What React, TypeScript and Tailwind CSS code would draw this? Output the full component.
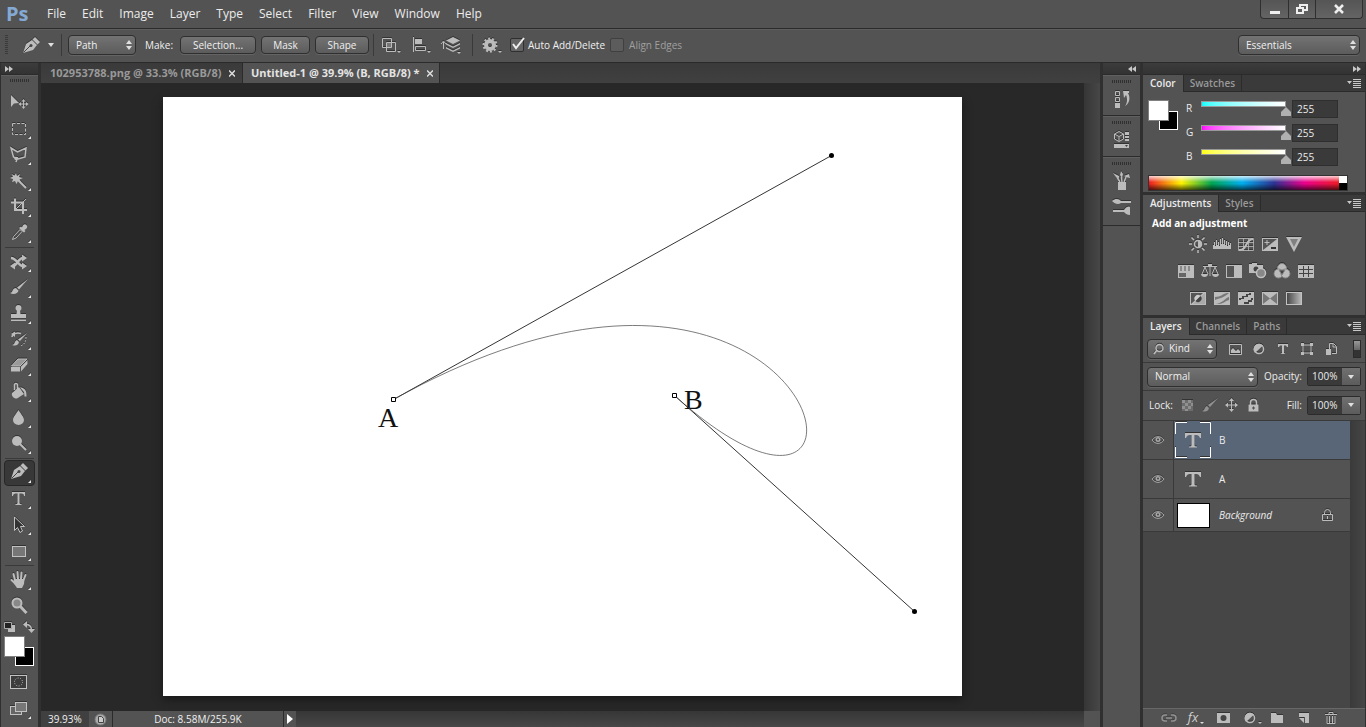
import React from "react";

type IconProps = {
  w?: number;
  h?: number;
  className?: string;
  children: React.ReactNode;
};

function Icon({ w = 24, h = 20, className = "", children }: IconProps) {
  return (
    <svg
      width={w}
      height={h}
      viewBox={`0 0 ${w} ${h}`}
      fill="currentColor"
      aria-hidden="true"
      className={`shrink-0 text-[#bcbcbc] [filter:drop-shadow(0_-1px_0_#333)] ${className}`}
    >
      {children}
    </svg>
  );
}

const line = { fill: "none", stroke: "currentColor" };

const penShape = (
  <>
    <path d="M2 19L5 10L11 6L16 11L12 16Z" />
    <path d="M11.5 5.5L14 3L19 8L16.5 10.5Z" />
    <path d="M2.5 18.5L9 12" stroke="#444" fill="none" />
    <circle cx="10" cy="11.5" r="1.5" fill="#444" />
  </>
);

const brushShape = (
  <>
    <path d="M19 4L10 14.5L8 12.5Z" />
    <path d="M1 18C4 18 3 13 7 13L9.5 15.5C9 19 4 20 1 18Z" />
  </>
);

const toolGroups = [
  [
    {
      name: "Move",
      corner: false,
      icon: (
        <>
          <path d="M2 5L2 17L5 13.5L10 13Z" />
          <path d="M14.5 10V18M10.5 14H18.5" {...line} />
          <path d="M14.5 9L12.5 11.5H16.5ZM14.5 19L12.5 16.5H16.5ZM9.5 14L12 12V16ZM19.5 14L17 12V16Z" />
        </>
      ),
    },
    {
      name: "Marquee",
      corner: true,
      icon: <rect x="3.5" y="7.5" width="13" height="11" strokeDasharray="3 1.5" {...line} />,
    },
    {
      name: "Lasso",
      corner: true,
      icon: (
        <path d="M2 6L8.5 10L17 6L16 15L9 17L4.5 15ZM9 16C5 14 5 18 8 17L7 20" strokeWidth="1.5" {...line} />
      ),
    },
    {
      name: "Magic Wand",
      corner: true,
      icon: (
        <>
          <path d="M7 5L8 8L11 6L10 9L14 10L10.5 11.5L12 14L9 13L7.5 16L6 13L3 14L4 11L1 10L4 8.5L2.5 6L5.5 7.5Z" />
          <path d="M9 12L17 20" strokeWidth="2" {...line} />
        </>
      ),
    },
    {
      name: "Crop",
      corner: true,
      icon: (
        <>
          <path d="M6 4.5V16H18M2 8.5H14V20" strokeWidth="2" {...line} />
          <path d="M7 15L17 5" {...line} />
        </>
      ),
    },
    {
      name: "Eyedropper",
      corner: true,
      icon: (
        <>
          <path d="M3.5 19.5L4.5 16.5L11 9.5L13 11.5L7 18Z" {...line} />
          <path d="M10 8L12 6.5L13 7.5C14 4 16 3.5 17.5 5C19 7 18 8.5 15.5 10L16.5 11L15 12.5Z" />
        </>
      ),
    },
  ],
  [
    {
      name: "Content-Aware Move",
      corner: true,
      icon: (
        <>
          <path d="M2 9C8 9 9 17 14 17M4 17C8 17 9 9 14 9" strokeWidth="2.5" {...line} />
          <path d="M13 13.5L18 17L13 20.5ZM13 5.5L18 9L13 12.5ZM6 13.5L1 17L6 20.5Z" />
        </>
      ),
    },
    { name: "Brush", corner: true, icon: brushShape },
    {
      name: "Clone Stamp",
      corner: true,
      icon: (
        <>
          <circle cx="9.5" cy="7" r="3" />
          <path d="M8 9H11L11.5 13H17V17H2V13H7.5ZM2 18.5H17V20H2Z" />
        </>
      ),
    },
    {
      name: "History Brush",
      corner: true,
      icon: (
        <>
          <path d="M18 6L11 14L9 12.5ZM3 18C6 18 5 14 8 13L10 15C9 19 6 19 3 18Z" />
          <path d="M3 10C3 7 8 5 12 6.5" strokeWidth="1.5" {...line} />
          <path d="M2 7L6 4.5L6 10Z" />
          <path d="M17 10C17 15 15 18 11 19" strokeDasharray="1.5 1.5" {...line} />
        </>
      ),
    },
    {
      name: "Eraser",
      corner: true,
      icon: (
        <>
          <path d="M9 6H18L11 13H2.5Z" fill="#999" stroke="currentColor" />
          <path d="M2 14H11V18.5H2ZM12 13.5L18.5 7V11L12 18.5Z" />
        </>
      ),
    },
    {
      name: "Paint Bucket",
      corner: true,
      icon: (
        <>
          <path d="M3 14L10 8L15 15L8 19.5C5 20 2 17 3 14Z" />
          <path d="M8.5 13V6C8 3.5 5 4 5.5 7V11" strokeWidth="1.5" {...line} />
          <path d="M11 8.5C15 8.500 18 11 17.5 17.5H15.5L15 13Z" />
        </>
      ),
    },
    {
      name: "Blur",
      corner: true,
      icon: <path d="M9.5 5C12 9 15 12 15 15A5.5 5 0 0 1 4 15C4 12 7 9 9.5 5Z" />,
    },
    {
      name: "Dodge",
      corner: true,
      icon: (
        <>
          <circle cx="8" cy="10" r="5" />
          <path d="M11 13L17 19" strokeWidth="2" {...line} />
        </>
      ),
    },
  ],
  [
    { name: "Pen", corner: true, icon: penShape },
    {
      name: "Horizontal Type",
      corner: true,
      icon: <path d="M3 6H16V10H15C15 8 14 7.5 10.5 7.5V16.5C10.500 18 11 18 12.5 18V19H6.5V18C8 18 8.5 18 8.5 16.5V7.5C5 7.5 4.5 8 4 10H3Z" />,
    },
    {
      name: "Path Selection",
      corner: true,
      icon: <path d="M5.5 5V18.5L8.5 15.5L11 20.5L13.5 19L11.5 14.5H15.5Z" fill="#333" stroke="#c2c2c2" />,
    },
    {
      name: "Rectangle",
      corner: true,
      icon: <rect x="3.5" y="8.5" width="13" height="10" fill="#777" stroke="#c2c2c2" />,
    },
  ],
  [
    {
      name: "Hand",
      corner: true,
      icon: (
        <>
          <path d="M6 13L4.5 7M9 12L8.5 5M12 12L12.5 5.5M14.5 13L16.5 8M7 17L2.5 13" strokeWidth="2" strokeLinecap="round" {...line} />
          <path d="M5 12H15.5L15 17L13 21H8L4.5 16Z" />
        </>
      ),
    },
    {
      name: "Zoom",
      corner: false,
      icon: (
        <>
          <circle cx="8" cy="10" r="4.5" fill="#888" stroke="#bcbcbc" strokeWidth="2" />
          <path d="M11 13L17.5 20" strokeWidth="3" {...line} />
        </>
      ),
    },
  ],
];

function Sep() {
  return <span className="h-[22px] w-px bg-[#3a3a3a]" />;
}

const raised =
  "rounded-sm border border-[#2f2f2f] bg-linear-to-b from-[#737373] to-[#5c5c5c] text-[#f0f0f0] shadow-[0_1px_0_#646464]";

type DropProps = { label: string; value: string; className: string; pad?: string; children?: React.ReactNode };

function Drop({ label, value, className, pad = "pl-[7px]", children }: DropProps) {
  return (
    <span className={`relative flex h-[20px] shrink-0 items-center ${className}`}>
      <select aria-label={label} className={`h-full w-full appearance-none pr-4 outline-none ${pad} ${raised}`}>
        <option>{value}</option>
      </select>
      {children}
      <svg width="6" height="10" viewBox="0 0 6 10" fill="#e0e0e0" className="pointer-events-none absolute right-1">
        <path d="M0 4L3 0L6 4ZM0 6H6L3 10Z" />
      </svg>
    </span>
  );
}

function MenuBar() {
  const menus = ["File", "Edit", "Image", "Layer", "Type", "Select", "Filter", "View", "Window", "Help"];
  return (
    <header className="flex h-[29px] shrink-0 items-start justify-between border-b border-[#2b2b2b]">
      <div className="flex h-[28px] items-center">
        <span className="w-[39px] pl-[6px] text-[20px] leading-none font-bold text-[#84a9d5]">Ps</span>
        <nav className="flex text-[12px] text-[#ececec]">
          {menus.map((m) => (
            <button key={m} type="button" className="px-2">
              {m}
            </button>
          ))}
        </nav>
      </div>
      <div className="mr-[3px] flex h-[19px] divide-x divide-[#2f2f2f] rounded-b-sm border border-t-0 border-[#2f2f2f] bg-linear-to-b from-[#555] to-[#646464]">
        <button type="button" aria-label="Minimize" className="flex w-[28px] items-center justify-center">
          <svg width="12" height="12" viewBox="0 0 12 12" fill="#eee"><path d="M1 8H11V11H1Z" /></svg>
        </button>
        <button type="button" aria-label="Restore" className="flex w-[27px] items-center justify-center">
          <svg width="12" height="12" viewBox="0 0 12 12" fill="none" stroke="#eee" strokeWidth="2"><path d="M4 4V2H11V7H8M1 5H7V10H1Z" /></svg>
        </button>
        <button type="button" aria-label="Close" className="flex w-[46px] items-center justify-center">
          <svg width="12" height="12" viewBox="0 0 12 12" fill="none" stroke="#eee" strokeWidth="2.5"><path d="M2 2L10 10M10 2L2 10" /></svg>
        </button>
      </div>
    </header>
  );
}

function OptionsBar() {
  const btn = `h-[18px] ${raised}`;
  const mark = <path d="M17 17H21L19 19Z" />;
  return (
    <div className="flex h-[33px] shrink-0 items-center border-t border-[#5e5e5e] pr-[6px] pb-[2px] pl-[5px]">
      <span className="h-5 w-[3px] bg-[repeating-linear-gradient(#3a3a3a_0_1px,transparent_1px_2px)]" />
      <button type="button" aria-label="Pen tool presets" className="ml-[13px] flex items-center">
        <Icon w={22} h={22}>{penShape}</Icon>
        <svg width="6" height="4" viewBox="0 0 6 4" fill="#e0e0e0" className="ml-[5px]"><path d="M0 0H6L3 4Z" /></svg>
      </button>
      <span className="w-[7px]" />
      <Sep />
      <Drop label="Tool mode" value="Path" className="mx-[6px] w-[68px]" />
      <span className="ml-[3px] w-[35px] text-[#f0f0f0]">Make:</span>
      <div className="flex gap-[5px] pr-[4px]">
        <button type="button" className={`w-[76px] ${btn}`}>Selection...</button>
        <button type="button" className={`w-[49px] ${btn}`}>Mask</button>
        <button type="button" className={`w-[54px] ${btn}`}>Shape</button>
      </div>
      <Sep />
      <div className="flex gap-[6px] px-[6px]">
        <button type="button" aria-label="Path operations">
          <Icon h={22}>
            <path d="M2.5 4.5H11.5V13.5H2.5ZM6.5 8.5H15.5V17.5H6.5Z" {...line} />
            <path d="M7 9H11V13H7Z" fill="#777" />
            {mark}
          </Icon>
        </button>
        <button type="button" aria-label="Path alignment">
          <Icon h={22}>
            <path d="M3.5 3V18M5.5 12.5H15.5V16.5H5.5Z" {...line} />
            <path d="M5 5H12V10H5Z" />
            {mark}
          </Icon>
        </button>
        <button type="button" aria-label="Path arrangement">
          <Icon h={22}>
            <path d="M3.5 15V8M1 10L3.5 7L6 10" {...line} />
            <path d="M13 3L20 6.5L13 10L6 6.5Z" />
            <path d="M6 9L13 12.5L20 9V10.5L13 14L6 10.5ZM6 13L13 16.5L20 13V14.5L13 18L6 14.5Z" />
            <path d="M17 18H21L19 20Z" />
          </Icon>
        </button>
      </div>
      <span className="w-[2px]" />
      <Sep />
      <button type="button" aria-label="Path options" className="ml-[8px]">
        <Icon h={22}>
          <circle cx="9" cy="11" r="4" strokeWidth="4" {...line} />
          <circle cx="9" cy="11" r="6.5" strokeWidth="2" strokeDasharray="2 2" {...line} />
          {mark}
        </Icon>
      </button>
      <label className="ml-[5px] flex items-center gap-[4px] text-[#f0f0f0]">
        <span className="relative flex size-[14px]">
          <input type="checkbox" defaultChecked className="size-[14px] appearance-none rounded-xs border border-[#2f2f2f] bg-[#646464]" />
          <svg width="16" height="14" viewBox="0 0 16 14" fill="none" stroke="#eee" strokeWidth="2" className="pointer-events-none absolute -top-px left-0">
            <path d="M3 7L6 11L14 1" />
          </svg>
        </span>
        Auto Add/Delete
      </label>
      <label className="ml-[5px] flex items-center gap-[5px] text-[#a0a0a0]">
        <input type="checkbox" disabled className="size-[14px] appearance-none rounded-xs border border-[#404040] bg-[#5c5c5c]" />
        Align Edges
      </label>
      <div className="flex-1" />
      <Drop label="Workspace" value="Essentials" className="w-[122px]" />
    </div>
  );
}

function Chevrons({ left = false }: { left?: boolean }) {
  return (
    <svg width="8" height="6" viewBox="0 0 8 6" fill="#c8c8c8" className={left ? "rotate-180" : ""}>
      <path d="M0 0L4 3L0 6ZM4 0L8 3L4 6Z" />
    </svg>
  );
}

function Grip() {
  return <span className="h-[3px] w-5 bg-[repeating-linear-gradient(90deg,#303030_0_1px,transparent_1px_2px)]" />;
}

const strip = "flex h-[12px] shrink-0 items-center border-b border-[#2b2b2b] bg-linear-to-b from-[#3c3c3c] to-[#333] px-1";

function ColorChips() {
  return (
    <div className="relative h-[30px] w-[30px]">
      <span className="absolute right-0 bottom-0 size-[19px] border border-white bg-black" />
      <span className="absolute top-0 left-0 size-[21px] border border-[#808080] bg-white" />
    </div>
  );
}

function Toolbar() {
  return (
    <aside className="flex w-[37px] shrink-0 flex-col">
      <div className={strip}><Chevrons /></div>
      <div className="flex flex-1 flex-col border-t border-[#606060] bg-[#535353]">
        <div className="flex h-[14px] items-center justify-center pb-[5px]"><Grip /></div>
        {toolGroups.map((group, i) => (
          <div key={i} className="flex flex-col">
            {i > 0 && <hr className="mx-1 my-px border-[#3a3a3a]" />}
            {group.map((tool) => (
              <button
                key={tool.name}
                type="button"
                aria-label={tool.name}
                className={
                  tool.name === "Pen"
                    ? "mx-[3px] h-[26px] rounded-sm border border-[#272727] bg-[#383838] pl-1"
                    : "h-[26px] pl-2"
                }
              >
                <Icon h={24}>
                  <g transform="translate(0 -1)">{tool.icon}</g>
                  {tool.corner && <path d="M22 19V22H19Z" fill="#e8e8e8" />}
                </Icon>
              </button>
            ))}
          </div>
        ))}
        <div className="flex h-[15px] items-center justify-between px-[3px]">
          <button type="button" aria-label="Default colors">
            <Icon w={12} h={12}>
              <path d="M4 4H11V11H4Z" />
              <path d="M.5 1.5H7.5V7.5H.5Z" fill="#222" stroke="#aaa" />
            </Icon>
          </button>
          <button type="button" aria-label="Switch colors">
            <Icon w={12} h={12}>
              <path d="M2 3.5C6 3 8.5 5 8.5 9" strokeWidth="1.5" {...line} />
              <path d="M0 3.5L4 0V7ZM5 8H12L8.5 12Z" />
            </Icon>
          </button>
        </div>
        <div className="pt-[2px] pl-[3px]"><ColorChips /></div>
        <button type="button" aria-label="Quick mask" className="mt-[4px] h-[24px] pl-2">
          <Icon h={22}>
            <rect x="1.5" y="4.5" width="16" height="13" fill="#3c3c3c" stroke="#c2c2c2" />
            <circle cx="9.5" cy="11" r="4" strokeDasharray="1 1.5" {...line} />
          </Icon>
        </button>
        <button type="button" aria-label="Screen mode" className="h-[30px] pl-2">
          <Icon h={24}>
            <rect x="1.5" y="9.5" width="11" height="8" fill="#666" stroke="#c2c2c2" />
            <rect x="6.5" y="5.5" width="11" height="9" fill="#777" stroke="#c2c2c2" />
            <path d="M22 19V22H19Z" fill="#e8e8e8" />
          </Icon>
        </button>
      </div>
    </aside>
  );
}

function Drawing() {
  return (
    <svg width="799" height="599" viewBox="0 0 799 599" className="shrink-0 bg-white shadow-[0_4px_8px_#1a1a1a]">
      <g fontFamily="'Liberation Serif', serif" fontSize="28" fill="#111">
        <text x="215" y="330">A</text>
        <text x="521" y="312">B</text>
      </g>
      <g fill="none" stroke="#000">
        <path d="M230.5 302.5L668.5 58.5M511.5 298.5L751.5 514.5" strokeWidth=".8" />
        <path d="M230.5 302.5C668.5 58.5 751.5 514.5 511.5 298.5" stroke="#444" strokeWidth=".7" />
        <path d="M228.5 300.5H232.5V304.5H228.5ZM509.5 296.5H513.5V300.5H509.5Z" fill="#fff" />
      </g>
      <circle cx="668.5" cy="58.5" r="2.5" />
      <circle cx="751.5" cy="514.5" r="2.5" />
    </svg>
  );
}

function CloseTab() {
  return (
    <button type="button" aria-label="Close tab">
      <svg width="6" height="7" viewBox="0 0 6 7" stroke="#ddd" strokeWidth="1.5"><path d="M0 .5L6 6.5M6 .5L0 6.5" /></svg>
    </button>
  );
}

function Document() {
  return (
    <main className="flex min-w-0 flex-1 flex-col">
      <div className="flex h-[20px] shrink-0 bg-linear-to-b from-[#3a3a3a] to-[#404040] text-[11px] font-bold whitespace-nowrap">
        <div className="flex w-[202px] items-center justify-between border-r border-[#2b2b2b] pr-[7px] pl-[9px] text-[#999]">
          <button type="button" className="font-bold">102953788.png @ 33.3% (RGB/8)</button>
          <CloseTab />
        </div>
        <div className="flex w-[197px] items-center justify-between border-r border-[#2b2b2b] bg-[#535353] pr-[6px] pl-[8px] text-[#e4e4e4]">
          <button type="button" className="font-bold">Untitled-1 @ 39.9% (B, RGB/8) *</button>
          <CloseTab />
        </div>
      </div>
      <div className="flex min-h-0 flex-1">
        <div className="flex min-w-0 flex-1 items-center justify-center overflow-hidden bg-[#282828] pb-px">
          <Drawing />
        </div>
        <div className="w-[16px] bg-linear-to-r from-[#363636] to-[#474747]" />
      </div>
      <footer className="flex h-[16px] shrink-0 text-[10px] text-[#f0f0f0]">
        <input aria-label="Zoom level" defaultValue="39.93%" className="w-[48px] bg-[#404040] pl-[7px] outline-none" />
        <button type="button" aria-label="Share" className="flex w-[24px] items-center justify-center border-r border-[#2b2b2b] bg-[#535353]">
          <svg width="13" height="13" viewBox="0 0 13 13">
            <circle cx="6.5" cy="6.5" r="5.5" fill="#aaa" stroke="#777" />
            <path d="M4.5 3.5H7.5L9.5 5.5V9.5H4.5Z" fill="#ccc" stroke="#444" />
          </svg>
        </button>
        <span className="w-[170px] bg-[#535353] text-center leading-[16px]">Doc: 8.58M/255.9K</span>
        <button type="button" aria-label="Status options" className="flex w-[13px] items-center justify-center border-l border-[#2b2b2b] bg-[#535353]">
          <svg width="6" height="10" viewBox="0 0 6 10" fill="#fff"><path d="M0 0L6 5L0 10Z" /></svg>
        </button>
        <div className="flex-1 bg-linear-to-b from-[#363636] to-[#474747]" />
        <div className="w-[16px] bg-[#535353]" />
      </footer>
    </main>
  );
}

function Dock() {
  const cell = "flex flex-col items-center gap-[4px] border-t border-t-[#606060] border-b border-b-[#2b2b2b] pt-[4px]";
  return (
    <aside className="flex w-[37px] shrink-0 flex-col bg-[#535353]">
      <div className={`${strip} justify-end`}><Chevrons left /></div>
      <div className={`h-[41px] ${cell}`}>
        <Grip />
        <button type="button" aria-label="History">
          <Icon w={20} h={22}>
            <path d="M3.5 4.5H7.5V8.5H3.5ZM3.5 10.5H7.5V14.5H3.5Z" {...line} />
            <path d="M3 16H8V21H3ZM11 4H17V6H16C18.5 10 18 16 13 19C15.5 15 15.5 11 14 8L12 11Z" />
          </Icon>
        </button>
      </div>
      <div className={`h-[41px] ${cell}`}>
        <Grip />
        <button type="button" aria-label="Properties">
          <Icon w={20} h={22}>
            <path d="M7 3.5L11.5 6V11L7 13.5L2.5 11V6ZM2.5 6L7 8.5L11.5 6M7 8.5V13" {...line} />
            <path d="M13 4H17V7H13ZM13 8H17V10H13ZM13 11H17V13H13ZM2 16H17V20H2Z" />
            <path d="M13 17H16L14.5 19Z" fill="#444" />
          </Icon>
        </button>
      </div>
      <div className={`h-[69px] ${cell}`}>
        <Grip />
        <button type="button" aria-label="Brush presets">
          <Icon w={20} h={22}>
            <path d="M6 13H14V21H6ZM1 4L7 7V9L4 8ZM9 2L11 5L10 9L8 6ZM12 7L17 5L18 9L14 8Z" />
            <path d="M5 8L8 13M9.5 8L10 13M14 8L12 13" strokeWidth="1.5" {...line} />
          </Icon>
        </button>
        <button type="button" aria-label="Brush">
          <Icon w={20} h={22}>
            <path d="M0 6C4 3 7 4 9 6H19V8H9C6 10 3 9 0 6ZM1 15H12C14 11 18 11 18 12V20C15 20 13 18 12 17H1Z" />
          </Icon>
        </button>
      </div>
    </aside>
  );
}

function Tabs({ names }: { names: string[] }) {
  return (
    <div className="flex h-[17px] shrink-0 bg-[#3a3a3a]">
      {names.map((name, i) => (
        <button
          key={name}
          type="button"
          className={
            i === 0
              ? "border-r border-[#2b2b2b] bg-[#535353] px-[7px] font-semibold text-[#ececec]"
              : "border-r border-b border-[#2b2b2b] px-[6px] font-semibold text-[#999]"
          }
        >
          {name}
        </button>
      ))}
      <div className="flex flex-1 items-center justify-end border-b border-[#2b2b2b] pr-[4px]">
        <button type="button" aria-label={`${names[0]} panel menu`}>
          <svg width="14" height="9" viewBox="0 0 14 9" fill="#c8c8c8">
            <path d="M0 2H5L2.5 5ZM6 0H14V1H6ZM6 2H14V3H6ZM6 4H14V5H6ZM6 6H14V7H6ZM6 8H14V9H6Z" />
          </svg>
        </button>
      </div>
    </div>
  );
}

function ColorPanel() {
  const channels = [
    { name: "R", track: "bg-linear-to-r from-[#00ffff] to-white" },
    { name: "G", track: "bg-linear-to-r from-[#ff00ff] to-white" },
    { name: "B", track: "bg-linear-to-r from-[#ffff00] to-white" },
  ];
  return (
    <section className="flex h-[117px] shrink-0 flex-col bg-[#535353]">
      <Tabs names={["Color", "Swatches"]} />
      <div className="flex px-[5px] pt-[8px]">
        <ColorChips />
        <div className="ml-[8px] flex flex-col">
          {channels.map((c) => (
            <div key={c.name} className="flex h-[24px] items-start text-[#ececec]">
              <label htmlFor={`value-${c.name}`} className="w-[10px] leading-[16px]">{c.name}</label>
              <div className="flex w-[95px] flex-col pt-px">
                <span className={`mx-[5px] h-[6px] border border-[#999] ${c.track}`} />
                <input
                  type="range"
                  min="0"
                  max="255"
                  defaultValue="255"
                  aria-label={`${c.name} slider`}
                  className="h-[9px] w-[95px] appearance-none bg-transparent [&::-webkit-slider-thumb]:h-[9px] [&::-webkit-slider-thumb]:w-[10px] [&::-webkit-slider-thumb]:appearance-none [&::-webkit-slider-thumb]:bg-[#b0b0b0] [&::-webkit-slider-thumb]:[clip-path:polygon(50%_0,100%_55%,100%_100%,0_100%,0_55%)]"
                />
              </div>
              <input id={`value-${c.name}`} defaultValue="255" className="ml-px h-[18px] w-[46px] border border-[#2f2f2f] bg-[#3a3a3a] pl-1 outline-none" />
            </div>
          ))}
        </div>
      </div>
      <div className="mx-[5px] mt-[3px] flex h-[16px] w-[200px] border border-[#333]">
        <div className="flex-1 bg-[linear-gradient(#fffc,#fff0_45%,#0000_55%,#000a),linear-gradient(90deg,#ed1c24,#fff200_17%,#00a651_33%,#00aeef_49%,#2e3192_66%,#ec008c_82%,#ed1c24)]" />
        <div className="flex w-[8px] flex-col">
          <span className="flex-1 bg-white" />
          <span className="flex-1 bg-black" />
        </div>
      </div>
    </section>
  );
}

const frame = <path d="M4 4H20V17H4Z" />;

const adjustments = [
  [
    {
      name: "Brightness/Contrast",
      icon: (
        <>
          <circle cx="12" cy="10" r="3.5" strokeWidth="1.5" {...line} />
          <path d="M12 6A4 4 0 0 1 12 14Z" />
          <path d="M12 1V4M12 16V19M3 10H6M18 10H21M5.5 3.5L8 6M16 14L18.5 16.5M18.5 3.5L16 6M8 14L5.5 16.5" strokeWidth="1.5" {...line} />
        </>
      ),
    },
    { name: "Levels", icon: <path d="M3 15V11H4V8H5V12H6V6H7V11H8V8H9V12H10V5H11V10H12V4H13V10H14V6H15V11H16V7H17V12H18V8H19V11H20V9H21V15Z" /> },
    {
      name: "Curves",
      icon: (
        <>
          <path d="M4.5 4.5H19.5V16.5H4.5ZM4 8.5H20M4 12.5H20M9.5 4V17M14.5 4V17" strokeWidth=".8" {...line} />
          <path d="M5 16C14 16 11 5 19 5" strokeWidth="2" {...line} />
        </>
      ),
    },
    {
      name: "Exposure",
      icon: (
        <>
          {frame}
          <path d="M5 5H19L5 16Z" fill="#555" />
          <path d="M9 6V11M6.5 8.5H11.5" {...line} />
          <path d="M13 13H18V15H13Z" fill="#333" />
        </>
      ),
    },
    {
      name: "Vibrance",
      icon: (
        <>
          <path d="M4 3H20L12 18Z" />
          <path d="M8 5H16L12 13Z" fill="#808080" />
        </>
      ),
    },
  ],
  [
    {
      name: "Hue/Saturation",
      icon: (
        <>
          {frame}
          <path d="M6 5H8V10H6ZM10 5H12V10H10ZM14 5H16V10H14Z" fill="#888" />
          <path d="M5 12H12V16H5Z" fill="#666" />
        </>
      ),
    },
    {
      name: "Color Balance",
      icon: (
        <>
          <path d="M5 5.5H19M12 3V15M7 6L4 13M7 6L10 13M17 6L14 13M17 6L20 13" {...line} />
          <path d="M3 13H10C10 17 3 17 3 13ZM14 13H21C21 17 14 17 14 13ZM10 3H14V6H10Z" />
        </>
      ),
    },
    {
      name: "Black & White",
      icon: (
        <>
          {frame}
          <path d="M5 5H12V16H5Z" fill="#555" />
        </>
      ),
    },
    {
      name: "Photo Filter",
      icon: (
        <>
          <path d="M3 3H6V2H11V4H17V12H3Z" />
          <circle cx="10" cy="8" r="2.5" fill="#444" />
          <circle cx="15" cy="12" r="4.5" fill="#888" stroke="#c2c2c2" strokeWidth="1.5" />
        </>
      ),
    },
    {
      name: "Channel Mixer",
      icon: (
        <g stroke="#888">
          <circle cx="12" cy="7" r="4.5" />
          <circle cx="8.5" cy="12.5" r="4.5" />
          <circle cx="15.5" cy="12.5" r="4.5" />
          <path d="M9 9H15L12 14Z" fill="#444" />
        </g>
      ),
    },
    {
      name: "Color Lookup",
      icon: (
        <>
          {frame}
          <path d="M5 8.5H19M5 12.5H19M9.5 5V16M14.5 5V16" stroke="#444" />
        </>
      ),
    },
  ],
  [
    {
      name: "Invert",
      icon: (
        <>
          {frame}
          <path d="M5 5H17L5 16Z" fill="#555" />
          <path d="M19 5V16H7Z" fill="#aaa" />
          <path d="M9.500 13A3.500 3.500 0 0 1 14.500 8Z" fill="#ccc" />
          <path d="M9.500 13A3.500 3.500 0 0 0 14.500 8Z" fill="#444" />
        </>
      ),
    },
    {
      name: "Posterize",
      icon: (
        <>
          {frame}
          <path d="M5 9C11 9 12 6 17 5H19C13 10 10 10 5 12ZM5 16C12 16 15 10 19 9V12C15 13 13 16 9 16Z" fill="#777" />
        </>
      ),
    },
    {
      name: "Threshold",
      icon: (
        <>
          {frame}
          <path d="M5 10H8V8H12V6H15V5H17V7H14V9H10V11H7V12H5ZM10 16V14H14V12H17V10H19V12H18V14H15V16Z" fill="#444" />
        </>
      ),
    },
    {
      name: "Selective Color",
      icon: (
        <>
          {frame}
          <path d="M5 5L12 10.5L5 16ZM19 5L12 10.5L19 16Z" fill="#777" />
        </>
      ),
    },
    {
      name: "Gradient Map",
      icon: (
        <>
          <defs>
            <linearGradient id="map">
              <stop stopColor="#444" />
              <stop offset="1" stopColor="#bbb" />
            </linearGradient>
          </defs>
          <rect x="4.5" y="4.5" width="15" height="12" fill="url(#map)" stroke="#c2c2c2" />
        </>
      ),
    },
  ],
];

function AdjustmentsPanel() {
  return (
    <section className="flex h-[120px] shrink-0 flex-col bg-[#535353]">
      <Tabs names={["Adjustments", "Styles"]} />
      <h2 className="pt-[3px] pl-[9px] leading-[16px] font-bold text-white">Add an adjustment</h2>
      <div className="flex flex-col gap-[7px] pt-[3px] pr-[16px]">
        {adjustments.map((row, i) => (
          <div key={i} className="flex justify-center">
            {row.map((a) => (
              <button key={a.name} type="button" aria-label={a.name}>
                <Icon>{a.icon}</Icon>
              </button>
            ))}
          </div>
        ))}
      </div>
    </section>
  );
}

function Percent({ label, id }: { label: string; id: string }) {
  return (
    <div className="flex items-center gap-[5px] text-[#ececec]">
      <label htmlFor={id}>{label}</label>
      <span className="flex h-[19px] rounded-xs border border-[#2b2b2b]">
        <input id={id} defaultValue="100%" className="w-[34px] bg-[#3a3a3a] pl-1 outline-none" />
        <button type="button" aria-label={`${label} slider`} className="flex w-[18px] items-center justify-center bg-linear-to-b from-[#707070] to-[#5c5c5c]">
          <svg width="6" height="4" viewBox="0 0 6 4" fill="#e0e0e0"><path d="M0 0H6L3 4Z" /></svg>
        </button>
      </span>
    </div>
  );
}

function Eye() {
  return (
    <button type="button" aria-label="Toggle visibility" className="flex w-[31px] shrink-0 items-center justify-center self-stretch border-r border-[#3a3a3a]">
      <Icon w={14} h={12} className="opacity-80">
        <path d="M1 6C4 1.5 10 1.5 13 6C10 10.5 4 10.5 1 6Z" {...line} />
        <circle cx="7" cy="5.5" r="2.5" />
        <circle cx="7" cy="5.5" r="1" fill="#444" />
      </Icon>
    </button>
  );
}

function TypeThumb({ selected = false }: { selected?: boolean }) {
  return (
    <Icon w={38} h={38}>
      {selected && <path d="M1.5 13V1.5H13M26 1.5H36.5V13M36.5 26V36.5H26M13 36.5H1.5V26" stroke="#fff" fill="none" />}
      <path d="M11 12H27V17H26C25 14.5 24 14 20.5 14V24C20.5 25 21.5 25.5 23 25.5V26.5H15V25.5C16.5 25.5 17.5 25 17.5 24V14C14 14 13 14.5 12 17H11Z" />
    </Icon>
  );
}

const lockBody = (
  <>
    <path d="M4.5 8V5.5A3 3 0 0 1 10.5 5.5V8" strokeWidth="1.5" {...line} />
    <path d="M2.5 7.5H12.5V14.5H2.5Z" />
    <path d="M7 10H8V12H7Z" stroke="#444" />
  </>
);

function LayersPanel() {
  return (
    <section className="flex min-h-0 flex-1 flex-col bg-[#535353]">
      <Tabs names={["Layers", "Channels", "Paths"]} />
      <div className="flex h-[28px] shrink-0 items-center border-b border-[#3a3a3a] px-[4px]">
        <Drop label="Filter type" value="Kind" className="w-[70px]" pad="pl-[21px]">
          <Icon w={12} h={12} className="pointer-events-none absolute left-[6px]">
            <circle cx="6.5" cy="5" r="3.5" strokeWidth="1.5" {...line} />
            <path d="M4 7L1 11" strokeWidth="1.5" {...line} />
          </Icon>
        </Drop>
        <div className="flex flex-1 justify-between pr-[10px] pl-[6px]">
          <button type="button" aria-label="Filter pixel layers">
            <Icon>
              <path d="M6.5 5.5H18.5V15.5H6.5Z" {...line} />
              <path d="M8 14V11L10 9L13 12L15 10L17 12V14Z" />
            </Icon>
          </button>
          <button type="button" aria-label="Filter adjustment layers">
            <Icon>
              <circle cx="12" cy="10" r="4.5" strokeWidth="1.5" {...line} />
              <path d="M8 14A5 5 0 0 1 16 6.5Z" />
            </Icon>
          </button>
          <button type="button" aria-label="Filter type layers">
            <Icon>
              <path d="M7 5H17V8H16L15 6.5H13V14L14.5 15H9.5L11 14V6.5H9L8 8H7Z" />
            </Icon>
          </button>
          <button type="button" aria-label="Filter shape layers">
            <Icon>
              <path d="M8 6H16V14H8Z" {...line} />
              <path d="M6 4H9V7H6ZM15 4H18V7H15ZM6 13H9V16H6ZM15 13H18V16H15Z" />
            </Icon>
          </button>
          <button type="button" aria-label="Filter smart objects">
            <Icon>
              <path d="M10.5 12V4.5H14.5L17.5 7.5V14.5H13M14 5V8H17" {...line} />
              <path d="M7 10H12V16H7Z" />
            </Icon>
          </button>
        </div>
        <button type="button" aria-label="Layer filtering" className="flex h-[18px] w-[9px] border border-[#2b2b2b] bg-[#333]">
          <span className="h-[9px] w-full bg-linear-to-b from-[#999] to-[#666]" />
        </button>
      </div>
      <div className="flex h-[28px] shrink-0 items-center justify-between border-b border-[#3a3a3a] px-[4px]">
        <Drop label="Blend mode" value="Normal" className="w-[111px]" />
        <Percent label="Opacity:" id="opacity" />
      </div>
      <div className="flex h-[30px] shrink-0 items-center border-b border-[#3a3a3a] px-[4px] pb-px pl-[6px]">
        <span className="w-[27px] text-[#ececec]">Lock:</span>
        <div className="flex flex-1">
          <button type="button" aria-label="Lock transparent pixels">
            <Icon w={22} h={18}>
              <path d="M6 4H17V15H6Z" fill="#6c6c6c" />
              <path d="M6 4H9V7H6ZM12 4H15V7H12ZM9 7H12V10H9ZM15 7H17V10H15ZM6 10H9V13H6ZM12 10H15V13H12ZM9 13H12V15H9Z" fill="#909090" />
            </Icon>
          </button>
          <button type="button" aria-label="Lock image pixels">
            <Icon w={22} h={18} className="opacity-60">
              <path d="M20 2L12 11L10 9ZM4 15C7 15 6 11 9 10L11 12C10 16 7 16 4 15Z" />
            </Icon>
          </button>
          <button type="button" aria-label="Lock position">
            <Icon w={22} h={18}>
              <path d="M11.5 4V14M6.5 9H16.5" {...line} />
              <path d="M11.5 2L9 5H14ZM11.5 16L9 13H14ZM5 9L8 6.5V11.5ZM18 9L15 6.5V11.5Z" />
            </Icon>
          </button>
          <button type="button" aria-label="Lock all">
            <Icon w={22} h={18}><g transform="translate(4 1)">{lockBody}</g></Icon>
          </button>
        </div>
        <Percent label="Fill:" id="fill" />
      </div>
      <div className="flex min-h-0 flex-1">
        <ul className="flex-1 bg-[#464646] text-[#ececec]">
          <li className="flex h-[39px] items-center border-b border-[#3a3a3a] bg-[#535353]">
            <Eye />
            <button type="button" className="flex h-full flex-1 items-center bg-[#596678] text-left">
              <TypeThumb selected />
              <span className="pl-[7px]">B</span>
            </button>
          </li>
          <li className="flex h-[39px] items-center border-b border-[#3a3a3a] bg-[#535353]">
            <Eye />
            <button type="button" className="flex flex-1 items-center text-left">
              <TypeThumb />
              <span className="pl-[7px]">A</span>
            </button>
          </li>
          <li className="flex h-[33px] items-center border-b border-[#3a3a3a] bg-[#535353]">
            <Eye />
            <button type="button" className="flex flex-1 items-center pl-[3px] text-left italic">
              <span className="h-[25px] w-[33px] border border-black bg-white" />
              <span className="flex-1 pl-[9px]">Background</span>
            </button>
            <Icon w={15} h={16} className="mr-[15px]">
              <path d="M4.5 8V5.5A3 3 0 0 1 10.5 5.5V8M2.5 7.5H12.5V13.5H2.5ZM7.5 9V12" {...line} />
            </Icon>
          </li>
        </ul>
        <div className="w-[15px] bg-linear-to-r from-[#3a3a3a] to-[#464646]" />
      </div>
      <footer className="flex h-[19px] shrink-0 items-center justify-between border-t border-[#686868] pr-[22px] pl-[14px]">
        <button type="button" aria-label="Link layers">
          <Icon h={18} className="opacity-60">
            <path d="M10 6H8A3 3 0 0 0 8 12H10M14 6H16A3 3 0 0 1 16 12H14M9 9H15" strokeWidth="1.5" {...line} />
          </Icon>
        </button>
        <button type="button" aria-label="Layer style" className="flex w-6 justify-center text-[13px] leading-none text-[#d0d0d0] italic">
          fx
          <svg width="6" height="14" viewBox="0 0 6 14" fill="#ddd"><path d="M2 11H6L4 13Z" /></svg>
        </button>
        <button type="button" aria-label="Add mask">
          <Icon h={18}>
            <path d="M6 4H19V14H6Z" />
            <circle cx="12.5" cy="9" r="3" fill="#444" />
          </Icon>
        </button>
        <button type="button" aria-label="New adjustment layer">
          <Icon h={18}>
            <circle cx="12" cy="9" r="4.5" strokeWidth="1.5" {...line} />
            <path d="M8 13A5 5 0 0 1 16 5.5Z" />
            <path d="M20 13H24L22 15Z" />
          </Icon>
        </button>
        <button type="button" aria-label="New group">
          <Icon h={18}><path d="M6 4H11L12 6H18V14H6Z" /></Icon>
        </button>
        <button type="button" aria-label="New layer">
          <Icon h={18}><path d="M7 4H17V14H13V8H7ZM7 9H12V14Z" /></Icon>
        </button>
        <button type="button" aria-label="Delete layer">
          <Icon h={18}>
            <path d="M6 5.5H18M10 5V3.5H14V5M8 7V14.5H16V7M10.5 7V14M13.5 7V14" {...line} />
          </Icon>
        </button>
      </footer>
    </section>
  );
}

export default function App() {
  return (
    <div className="flex h-screen flex-col overflow-hidden bg-[#535353] font-['Open_Sans','Noto_Sans',sans-serif] text-[10px]">
      <MenuBar />
      <OptionsBar />
      <div className="flex min-h-0 flex-1 gap-[3px] border-t border-[#2b2b2b] bg-[#303030] px-px">
        <Toolbar />
        <Document />
        <Dock />
        <aside className="flex w-[222px] shrink-0 flex-col gap-[3px]">
          <div className="flex flex-col">
            <div className={`${strip} justify-end`}><Chevrons /></div>
            <ColorPanel />
          </div>
          <AdjustmentsPanel />
          <LayersPanel />
        </aside>
      </div>
    </div>
  );
}
